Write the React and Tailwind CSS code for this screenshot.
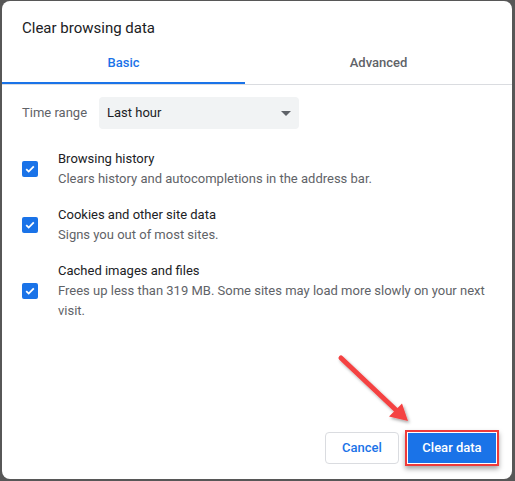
export default function App() {
  const items = [
    { t: "Browsing history", d: ["Clears history and autocompletions in the address bar."] },
    { t: "Cookies and other site data", d: ["Signs you out of most sites."] },
    { t: "Cached images and files", d: ["Frees up less than 319 MB. Some sites may load more slowly on your next", "visit."] },
  ];
  return (
    <div className="w-[515px] h-[481px] bg-[#575757] pt-[1px] pl-[2px] pr-[3px] pb-[2px]" style={{ fontFamily: "Roboto, 'Liberation Sans', sans-serif" }}>
      <div className="relative w-full h-full bg-white rounded-[8px] flex flex-col">
        <div className="pl-[20px] pt-[17px] text-[15px] leading-[20px] text-[#202124]">Clear browsing data</div>
        <div className="mt-[13px] flex border-b border-[#dadce0] h-[34px]">
          <div className="w-[243px] flex flex-col items-center">
            <div className="text-[13px] font-medium text-[#1a73e8] leading-[20px] pt-[2px] flex-1">Basic</div>
            <div className="w-full h-[2px] bg-[#1a73e8]"></div>
          </div>
          <div className="flex-1 flex justify-center">
            <div className="text-[13px] font-medium text-[#5f6368] leading-[20px] pt-[2px]">Advanced</div>
          </div>
        </div>
        <div className="flex items-center mt-[12px] pl-[20px]">
          <div className="text-[13px] text-[#5f6368] w-[77px]">Time range</div>
          <div className="w-[200px] h-[32px] bg-[#f1f3f4] rounded-[4px] flex items-center justify-between pl-[8px] pr-[8px]">
            <span className="text-[13px] text-[#202124]">Last hour</span>
            <svg width="10" height="5" viewBox="0 0 10 5"><path d="M0 0h10L5 5z" fill="#5f6368" /></svg>
          </div>
        </div>
        <div className="mt-[20px] flex flex-col gap-[16px]">
          {items.map((it) => (
            <div key={it.t} className="flex items-center pl-[20px]">
              <div className="w-[16px] h-[16px] rounded-[2px] bg-[#1a73e8] flex items-center justify-center shrink-0">
                <svg width="12" height="12" viewBox="0 0 12 12"><path d="M2.2 6.2l2.5 2.4L9.8 3.4" fill="none" stroke="white" strokeWidth="1.8" /></svg>
              </div>
              <div className="ml-[20px] text-[13px] leading-[20px]">
                <div className="text-[#202124]">{it.t}</div>
                {it.d.map((l) => (
                  <div key={l} className="text-[#5f6368]">{l}</div>
                ))}
              </div>
            </div>
          ))}
        </div>
        <div className="flex-1"></div>
        <div className="flex justify-end items-center pr-[13px] pb-[13px] gap-[6px]">
          <button className="w-[74px] h-[32px] rounded-[4px] border border-[#dadce0] text-[13px] font-medium text-[#1a73e8] bg-white">Cancel</button>
          <div className="border-2 border-[#ef3b3b] p-[1px] shadow-[0_3px_5px_rgba(0,0,0,0.35)]">
            <button className="w-[88px] h-[30px] bg-[#1a73e8] text-white text-[13px] font-medium">Clear data</button>
          </div>
        </div>
        <svg className="absolute left-0 top-0 pointer-events-none" width="512" height="480" viewBox="0 0 512 480" style={{ overflow: "visible" }}>
          <defs>
            <filter id="sh" x="-20%" y="-20%" width="150%" height="150%">
              <feDropShadow dx="1.5" dy="2" stdDeviation="1.5" floodColor="#000" floodOpacity="0.35" />
            </filter>
          </defs>
          <g filter="url(#sh)" transform="translate(-2,-1)">
            <line x1="341" y1="358" x2="396" y2="410" stroke="#f44242" strokeWidth="5" strokeLinecap="round" />
            <path d="M408 421 L389 416.5 L402 403.5 Z" fill="#f44242" />
          </g>
        </svg>
      </div>
    </div>
  );
}
